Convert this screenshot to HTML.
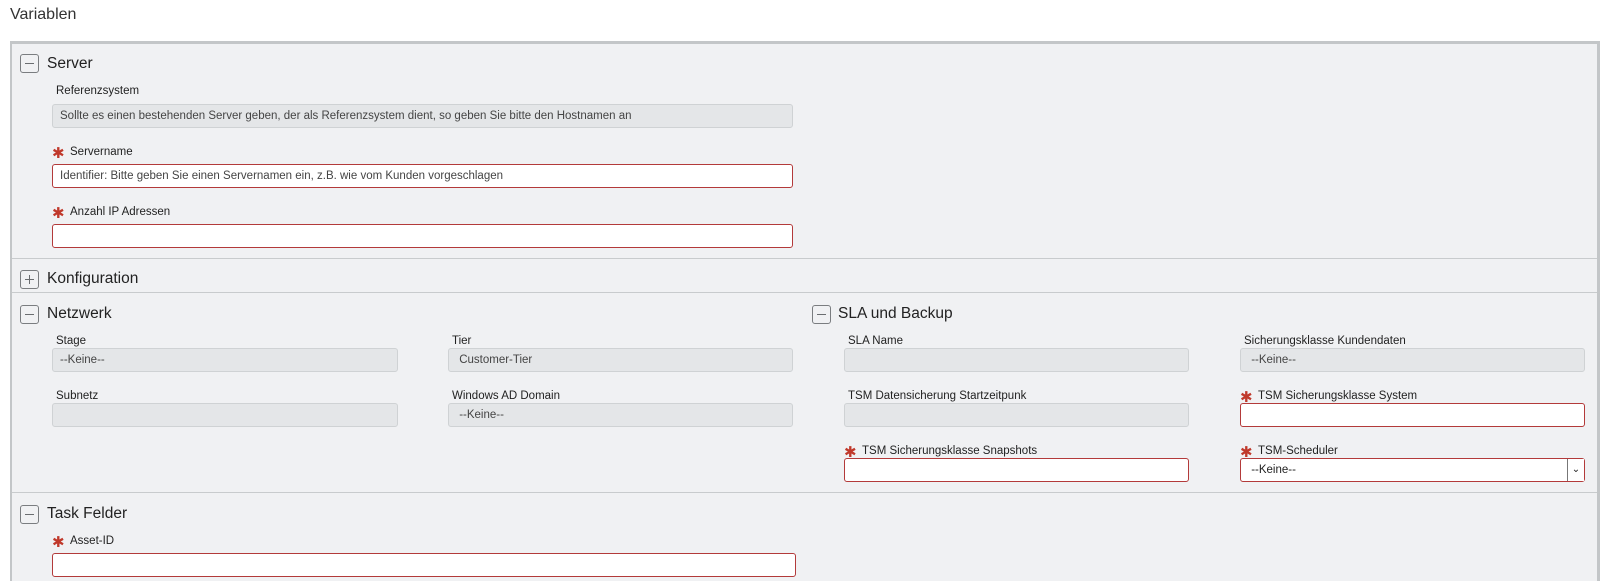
<!DOCTYPE html>
<html><head><meta charset="utf-8"><style>
*{box-sizing:border-box;margin:0;padding:0}
body{width:1601px;height:573px;overflow:hidden;background:#fff;font-family:"Liberation Sans",sans-serif;color:#2e2e2e;position:relative}
.a{position:absolute}
.title{left:10px;top:6px;font-size:16px;color:#333}
.box{left:10px;top:41px;width:1590px;height:540px;background:#f0f1f3;border-top:3px solid #c3c6c8;border-left:2px solid #c3c6c8;border-right:3px solid #c3c6c8}
.hr{height:1px;background:#c8cbcd;left:12px;width:1585px}
.ic{width:19px;height:19px;border:1px solid #7a7d80;border-radius:3px;background:#f0f1f3}
.ic:before{content:"";position:absolute;left:4px;top:8px;width:9px;height:1px;background:#6a6d70}
.ic.p:after{content:"";position:absolute;left:8px;top:4px;width:1px;height:9px;background:#6a6d70}
.h{font-size:15.5px;color:#222;line-height:20px}
.l{font-size:11.5px;color:#222;line-height:14px}
.st{color:#c0392b;font-family:"DejaVu Sans",sans-serif;font-size:15px;line-height:14px;position:absolute;margin-left:-18px;top:1px}
.in{height:24px;border-radius:3px;font-size:11.5px;line-height:22px;padding-left:7px;color:#444}
.ro{background:#e4e6e8;border:1px solid #cfd2d4}
.rq{background:#fff;border:1px solid #b33a3a}
</style></head><body>
<div class="a title">Variablen</div>
<div class="a box"></div>

<div class="a ic" style="left:20px;top:54px"></div>
<div class="a h" style="left:47px;top:54px">Server</div>
<div class="a l" style="left:56px;top:84px">Referenzsystem</div>
<div class="a in ro" style="left:52px;top:104px;width:741px">Sollte es einen bestehenden Server geben, der als Referenzsystem dient, so geben Sie bitte den Hostnamen an</div>
<div class="a l" style="left:70px;top:145px"><span class="st">✱</span>Servername</div>
<div class="a in rq" style="left:52px;top:164px;width:741px">Identifier: Bitte geben Sie einen Servernamen ein, z.B. wie vom Kunden vorgeschlagen</div>
<div class="a l" style="left:70px;top:205px"><span class="st">✱</span>Anzahl IP Adressen</div>
<div class="a in rq" style="left:52px;top:224px;width:741px"></div>
<div class="a hr" style="top:258px"></div>

<div class="a ic p" style="left:20px;top:270px"></div>
<div class="a h" style="left:47px;top:269px">Konfiguration</div>
<div class="a hr" style="top:292px"></div>

<div class="a ic" style="left:20px;top:305px"></div>
<div class="a h" style="left:47px;top:304px">Netzwerk</div>
<div class="a l" style="left:56px;top:334px">Stage</div>
<div class="a in ro" style="left:52px;top:348px;width:346px">--Keine--</div>
<div class="a l" style="left:452px;top:334px">Tier</div>
<div class="a in ro" style="left:448px;top:348px;width:345px">&nbsp;Customer-Tier</div>
<div class="a l" style="left:56px;top:389px">Subnetz</div>
<div class="a in ro" style="left:52px;top:403px;width:346px"></div>
<div class="a l" style="left:452px;top:389px">Windows AD Domain</div>
<div class="a in ro" style="left:448px;top:403px;width:345px">&nbsp;--Keine--</div>

<div class="a ic" style="left:812px;top:305px"></div>
<div class="a h" style="left:838px;top:304px">SLA und Backup</div>
<div class="a l" style="left:848px;top:334px">SLA Name</div>
<div class="a in ro" style="left:844px;top:348px;width:345px"></div>
<div class="a l" style="left:1244px;top:334px">Sicherungsklasse Kundendaten</div>
<div class="a in ro" style="left:1240px;top:348px;width:345px">&nbsp;--Keine--</div>
<div class="a l" style="left:848px;top:389px">TSM Datensicherung Startzeitpunk</div>
<div class="a in ro" style="left:844px;top:403px;width:345px"></div>
<div class="a l" style="left:1258px;top:389px"><span class="st">✱</span>TSM Sicherungsklasse System</div>
<div class="a in rq" style="left:1240px;top:403px;width:345px"></div>
<div class="a l" style="left:862px;top:444px"><span class="st">✱</span>TSM Sicherungsklasse Snapshots</div>
<div class="a in rq" style="left:844px;top:458px;width:345px"></div>
<div class="a l" style="left:1258px;top:444px"><span class="st">✱</span>TSM-Scheduler</div>
<div class="a in rq" style="left:1240px;top:458px;width:345px;color:#222">&nbsp;--Keine--
<div class="a" style="right:0;top:0;width:17px;height:22px;border-left:1px solid #777;background:#fff;text-align:center;font-size:10px;line-height:22px">&#8964;</div></div>
<div class="a hr" style="top:492px"></div>

<div class="a ic" style="left:20px;top:505px"></div>
<div class="a h" style="left:47px;top:504px">Task Felder</div>
<div class="a l" style="left:70px;top:534px"><span class="st">✱</span>Asset-ID</div>
<div class="a in rq" style="left:52px;top:553px;width:744px"></div>
</body></html>
